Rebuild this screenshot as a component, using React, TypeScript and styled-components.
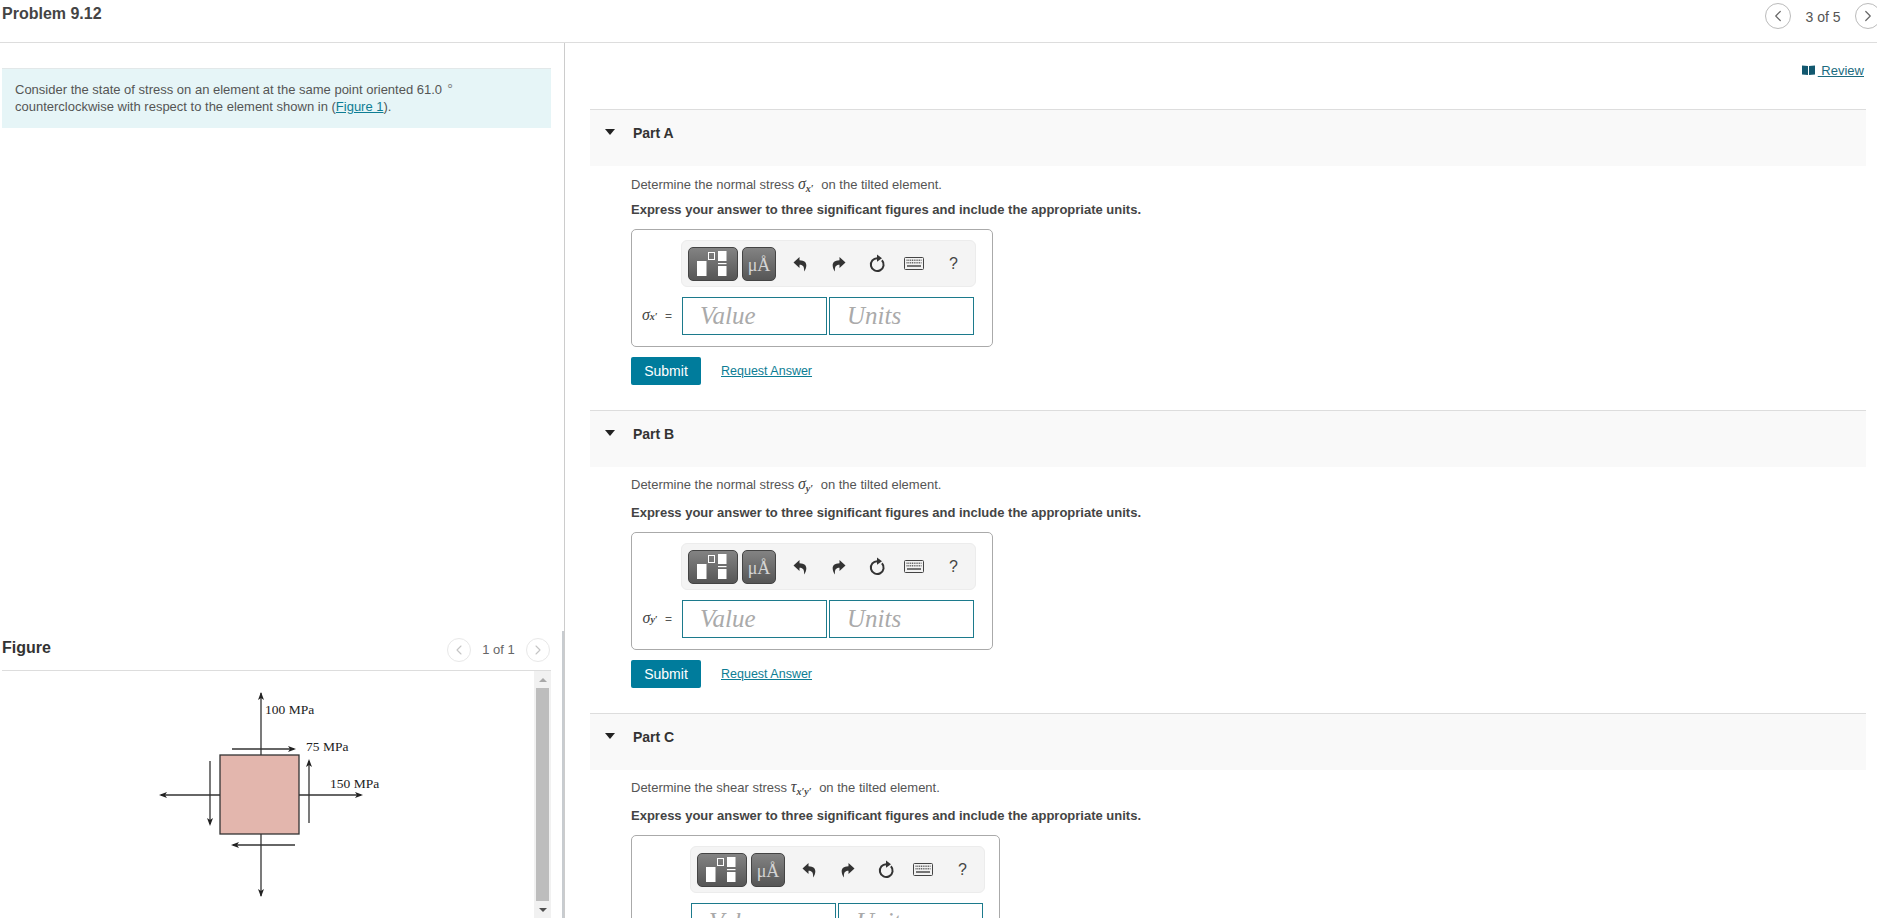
import React from 'react';
import styled, { createGlobalStyle } from 'styled-components';
import { ChevronLeft, ChevronRight } from 'lucide-react';

interface PartData {
  id: string;
  title: string;
  intro: string;
  symbol: string;
  sub: string;
  tall?: boolean;
  indent: number;
  boxWidth: number;
}

const parts: PartData[] = [
  { id: 'a', title: 'Part A', intro: 'Determine the normal stress', symbol: 'σ', sub: 'x′', indent: 50, boxWidth: 362 },
  { id: 'b', title: 'Part B', intro: 'Determine the normal stress', symbol: 'σ', sub: 'y′', tall: true, indent: 50, boxWidth: 362 },
  { id: 'c', title: 'Part C', intro: 'Determine the shear stress', symbol: 'τ', sub: 'x′y′', tall: true, indent: 59, boxWidth: 369 },
];

const TemplateIcon = () => (
  <svg width="48" height="32" viewBox="0 0 48 32">
    <rect x="8" y="13" width="9.5" height="15" fill="#fff" />
    <rect x="19.5" y="4.5" width="6" height="7" fill="none" stroke="#fff" />
    <rect x="29" y="3" width="8.5" height="10" fill="#fff" />
    <rect x="29" y="15" width="8.5" height="1.2" fill="#fff" />
    <rect x="29" y="18" width="8.5" height="10" fill="#fff" />
  </svg>
);

const UndoIcon = ({ flip }: { flip?: boolean }) => (
  <svg width="15" height="16" viewBox="0 0 15 16">
    <path
      d="M6.5 1 L0.5 6.5 L6.5 12 V8.7 C10 8.7 11.5 10.5 11 15.5 C14 11.5 15.5 4.5 6.5 4.3 Z"
      fill="#333"
      transform={flip ? 'translate(15 0) scale(-1 1)' : undefined}
    />
  </svg>
);

const ResetIcon = () => (
  <svg width="18" height="19" viewBox="0 0 18 19">
    <path
      d="M12.9 6.2 A6.4 6.4 0 1 1 8.6 4.2"
      fill="none"
      stroke="#333"
      strokeWidth="2"
    />
    <path d="M8 0.6 L13 4.2 L8 7.8 Z" fill="#333" />
  </svg>
);

const KeyboardIcon = () => (
  <svg width="20" height="13" viewBox="0 0 20 13">
    <rect x="0.5" y="0.5" width="19" height="12" rx="1" fill="#f2f2f2" stroke="#444" />
    <path d="M2.5 3.2h15M2.5 5.7h15" stroke="#666" strokeWidth="1.5" strokeDasharray="1.1 0.7" />
    <path d="M3 9h14" stroke="#555" strokeWidth="1.6" />
  </svg>
);

const BookIcon = () => (
  <svg width="13" height="10" viewBox="0 0 13 10">
    <path d="M0 0.5 L6 1 V10 L0 9.5 Z M7 1 L13 0.5 V9.5 L7 10 Z" fill="#12586f" />
  </svg>
);

const Arrow = ({ d, tip, rot }: { d: string; tip: [number, number]; rot: number }) => (
  <g>
    <path d={d} stroke="#333" strokeWidth="1.3" fill="none" />
    <path
      d="M0 0 L-8 -3 L-6 0 L-8 3 Z"
      fill="#222"
      transform={`translate(${tip[0]} ${tip[1]}) rotate(${rot})`}
    />
  </g>
);

const StressElement = () => (
  <svg width="532" height="247" viewBox="2 671 532 247">
    <rect x="220" y="755" width="79" height="79" fill="#e3b6ad" stroke="#333" strokeWidth="1.3" />
    <Arrow d="M261 755 V693" tip={[261, 692]} rot={-90} />
    <Arrow d="M261 834 V896" tip={[261, 897]} rot={90} />
    <Arrow d="M299 795 H361" tip={[363, 795]} rot={0} />
    <Arrow d="M220 795 H161" tip={[159, 795]} rot={180} />
    <Arrow d="M232 749 H294" tip={[296, 749]} rot={0} />
    <Arrow d="M295 845 H233" tip={[231, 845]} rot={180} />
    <Arrow d="M309 823 V761" tip={[309, 759]} rot={-90} />
    <Arrow d="M210 761 V824" tip={[210, 826]} rot={90} />
    <FigureLabel x="265" y="714">100 MPa</FigureLabel>
    <FigureLabel x="306" y="751">75 MPa</FigureLabel>
    <FigureLabel x="330" y="788">150 MPa</FigureLabel>
  </svg>
);

const App: React.FC = () => {
  return (
    <>
      <GlobalStyle />
      <Page>
        <TopBar>
          <Title>Problem 9.12</Title>
          <Pager>
            <RoundButton>
              <ChevronLeft size={18} strokeWidth={1.6} />
            </RoundButton>
            <PagerText>3 of 5</PagerText>
            <RoundButton>
              <ChevronRight size={18} strokeWidth={1.6} />
            </RoundButton>
          </Pager>
        </TopBar>
        <Columns>
          <LeftPane>
            <InfoBox>
              Consider the state of stress on an element at the same point oriented 61.0 <Deg>∘</Deg>
              <br />
              counterclockwise with respect to the element shown in (<TextLink>Figure 1</TextLink>).
            </InfoBox>
            <FigurePanel>
              <FigureHead>
                <FigureTitle>Figure</FigureTitle>
                <FigurePager>
                  <RoundButton $faded>
                    <ChevronLeft size={16} strokeWidth={1.6} />
                  </RoundButton>
                  <FigurePagerText>1 of 1</FigurePagerText>
                  <RoundButton $faded>
                    <ChevronRight size={16} strokeWidth={1.6} />
                  </RoundButton>
                </FigurePager>
              </FigureHead>
              <FigureScroll>
                <StressElement />
                <ScrollTrack>
                  <ScrollArrow $up />
                  <ScrollThumb />
                  <ScrollArrow />
                </ScrollTrack>
              </FigureScroll>
            </FigurePanel>
          </LeftPane>
          <RightPane>
            <ReviewRow>
              <ReviewLink>
                <BookIcon />
                <span>&nbsp;Review</span>
              </ReviewLink>
            </ReviewRow>
            {parts.map(part => (
              <PartBlock key={part.id}>
                <PartHeader>
                  <Caret />
                  <PartTitle>{part.title}</PartTitle>
                </PartHeader>
                <PartBody>
                  <Intro $tall={part.tall}>
                    {part.intro} <MathSymbol>{part.symbol}</MathSymbol>
                    <MathSub>{part.sub}</MathSub> on the tilted element.
                  </Intro>
                  <Instruction>
                    Express your answer to three significant figures and include the appropriate units.
                  </Instruction>
                  <AnswerBox $width={part.boxWidth}>
                    <Toolbar $indent={part.indent}>
                      <TemplateButton>
                        <TemplateIcon />
                      </TemplateButton>
                      <UnitButton>μÅ</UnitButton>
                      <ToolIcon $left={17}>
                        <UndoIcon />
                      </ToolIcon>
                      <ToolIcon $left={23}>
                        <UndoIcon flip />
                      </ToolIcon>
                      <ToolIcon $left={23}>
                        <ResetIcon />
                      </ToolIcon>
                      <ToolIcon $left={17}>
                        <KeyboardIcon />
                      </ToolIcon>
                      <HelpMark>?</HelpMark>
                    </Toolbar>
                    <InputRow>
                      <InputLabel $width={part.indent}>
                        <MathSymbol>{part.symbol}</MathSymbol>
                        <MathSub>{part.sub}</MathSub> =
                      </InputLabel>
                      <AnswerField>Value</AnswerField>
                      <AnswerField>Units</AnswerField>
                    </InputRow>
                  </AnswerBox>
                  <ActionRow>
                    <SubmitButton>Submit</SubmitButton>
                    <RequestLink>Request Answer</RequestLink>
                  </ActionRow>
                </PartBody>
              </PartBlock>
            ))}
          </RightPane>
        </Columns>
      </Page>
    </>
  );
};

const GlobalStyle = createGlobalStyle`
  html, body {
    margin: 0;
    height: 100%;
    overflow: hidden;
    background: #fff;
    font-family: "Liberation Sans", Arial, sans-serif;
    color: #555;
  }
`;

const Page = styled.div`
  width: 1877px;
  height: 918px;
  display: flex;
  flex-direction: column;
  overflow: hidden;
`;

const TopBar = styled.header`
  flex: none;
  height: 42px;
  border-bottom: 1px solid #ddd;
  display: flex;
  align-items: center;
  justify-content: space-between;
  padding-left: 2px;
  margin-right: -4px;
`;

const Title = styled.h1`
  margin: 0 0 14px;
  font-size: 16px;
  font-weight: bold;
  color: #444;
`;

const Pager = styled.div`
  display: flex;
  align-items: center;
  margin-bottom: 10px;
`;

const PagerText = styled.span`
  width: 64px;
  text-align: center;
  font-size: 14px;
  color: #555;
  padding-top: 2px;
`;

const RoundButton = styled.span<{ $faded?: boolean }>`
  width: ${props => (props.$faded ? '24px' : '26px')};
  height: ${props => (props.$faded ? '24px' : '26px')};
  box-sizing: border-box;
  border-radius: 50%;
  border: 1px solid ${props => (props.$faded ? '#e8e8e8' : '#bbb')};
  color: ${props => (props.$faded ? '#c4c4c4' : '#666')};
  display: flex;
  align-items: center;
  justify-content: center;
`;

const Columns = styled.div`
  flex: 1;
  min-height: 0;
  display: flex;
`;

const LeftPane = styled.aside`
  flex: none;
  width: 564px;
  border-right: 1px solid #ccc;
  display: flex;
  flex-direction: column;
  justify-content: space-between;
  padding-top: 25px;
`;

const InfoBox = styled.div`
  width: 536px;
  margin-left: 2px;
  height: 47px;
  padding: 12px 0 0 13px;
  background: #e6f5f7;
  border-top: 1px solid #e2e8e9;
  font-size: 13px;
  line-height: 17px;
  color: #555;
`;

const Deg = styled.sup`
  font-size: 13px;
  line-height: 0;
  color: #888;
`;

const TextLink = styled.a`
  color: #0d7d94;
  text-decoration: underline;
`;

const FigurePanel = styled.section`
  width: 562px;
  border-right: 2px solid #c8ccd0;
`;

const FigureHead = styled.div`
  width: 549px;
  margin-left: 2px;
  height: 40px;
  border-bottom: 1px solid #ddd;
  display: flex;
  align-items: center;
  justify-content: space-between;
  box-sizing: border-box;
`;

const FigureTitle = styled.h2`
  margin: 0 0 5px;
  font-size: 16px;
  font-weight: bold;
  color: #333;
`;

const FigurePager = styled.div`
  display: flex;
  align-items: center;
  margin: 0 1px 2px 0;
`;

const FigurePagerText = styled.span`
  width: 55px;
  text-align: center;
  font-size: 13px;
  color: #666;
`;

const FigureScroll = styled.div`
  width: 549px;
  margin-left: 2px;
  height: 247px;
  display: flex;
`;

const FigureLabel = styled.text`
  font-family: "Liberation Serif", "Times New Roman", serif;
  font-size: 13.5px;
  fill: #222;
`;

const ScrollTrack = styled.div`
  width: 17px;
  background: #f1f1f1;
  display: flex;
  flex-direction: column;
  align-items: center;
`;

const ScrollThumb = styled.div`
  flex: 1;
  width: 13px;
  background: #bdbdbd;
`;

const ScrollArrow = styled.div<{ $up?: boolean }>`
  flex: none;
  height: 17px;
  width: 0;
  display: flex;
  align-items: center;
  justify-content: center;

  &::before {
    content: '';
    border-left: 4px solid transparent;
    border-right: 4px solid transparent;
    ${props =>
      props.$up ? 'border-bottom: 4px solid #a8a8a8;' : 'border-top: 4px solid #505050;'}
  }
`;

const RightPane = styled.main`
  flex: 1;
  min-width: 0;
  padding: 0 11px 0 25px;
  overflow: hidden;
`;

const ReviewRow = styled.div`
  height: 66px;
  display: flex;
  justify-content: flex-end;
  padding: 18px 2px 0 0;
  box-sizing: border-box;
`;

const ReviewLink = styled.a`
  display: flex;
  align-items: center;
  height: 18px;
  font-size: 13px;
  color: #1c6b80;

  span {
    margin-left: 3px;
    text-decoration: underline;
  }
`;

const PartBlock = styled.section`
  padding-bottom: 25px;
`;

const PartHeader = styled.div`
  height: 57px;
  background: #f9f9f9;
  border-top: 1px solid #ddd;
  display: flex;
  align-items: center;
  padding: 0 0 10px 15px;
  box-sizing: border-box;
`;

const Caret = styled.span`
  width: 0;
  height: 0;
  border-left: 5.5px solid transparent;
  border-right: 5.5px solid transparent;
  border-top: 6px solid #222;
  margin-right: 18px;
  margin-bottom: 3px;
`;

const PartTitle = styled.h3`
  margin: 0;
  font-size: 14px;
  font-weight: bold;
  color: #333;
`;

const PartBody = styled.div`
  padding: 7px 0 0 41px;
`;

const Intro = styled.p<{ $tall?: boolean }>`
  margin: ${props => (props.$tall ? '0 0 7px' : '2px 0 5px')};
  font-size: 13px;
  line-height: ${props => (props.$tall ? '22px' : '20px')};
  color: #555;
`;

const MathSymbol = styled.i`
  font-family: "Liberation Serif", "Times New Roman", serif;
  font-size: 16px;
  line-height: 0;
  color: #444;
`;

const MathSub = styled.i`
  font-family: "Liberation Serif", "Times New Roman", serif;
  font-size: 10px;
  font-weight: bold;
  line-height: 0;
  vertical-align: -3px;
  color: #444;
  margin-right: 4px;
`;

const Instruction = styled.p`
  margin: 0 0 9px;
  font-size: 13px;
  line-height: 20px;
  font-weight: bold;
  color: #444;
`;

const AnswerBox = styled.div<{ $width: number }>`
  width: ${props => props.$width}px;
  height: 118px;
  box-sizing: border-box;
  border: 1px solid #aaa;
  border-radius: 5px;
  padding-top: 10px;
`;

const Toolbar = styled.div<{ $indent: number }>`
  width: 295px;
  height: 47px;
  margin-left: ${props => props.$indent - 1}px;
  box-sizing: border-box;
  border: 1px solid #ececec;
  border-radius: 6px;
  background: #f4f4f4;
  display: flex;
  align-items: center;
  padding-left: 6px;
`;

const TemplateButton = styled.span`
  width: 50px;
  height: 34px;
  box-sizing: border-box;
  border: 1px solid #444;
  border-radius: 5px;
  background: linear-gradient(#838383, #565656);
  display: flex;
  align-items: center;
  justify-content: center;
`;

const UnitButton = styled(TemplateButton)`
  width: 34px;
  margin-left: 4px;
  padding-top: 3px;
  font-family: "Liberation Serif", "Times New Roman", serif;
  font-size: 18px;
  color: #d4d4d4;
`;

const ToolIcon = styled.span<{ $left: number }>`
  margin-left: ${props => props.$left}px;
  display: flex;
  color: #333;
`;

const HelpMark = styled.span`
  margin-left: 25px;
  font-size: 16px;
  color: #444;
`;

const InputRow = styled.div`
  display: flex;
  align-items: center;
  margin-top: 10px;
  gap: 2px;
`;

const InputLabel = styled.span<{ $width: number }>`
  width: ${props => props.$width - 2}px;
  padding-right: 8px;
  box-sizing: border-box;
  display: flex;
  justify-content: flex-end;
  align-items: baseline;
  white-space: pre;
  font-size: 12px;
  color: #555;
`;

const AnswerField = styled.div`
  width: 145px;
  height: 38px;
  box-sizing: border-box;
  border: 1px solid #1c7a8c;
  padding-left: 17px;
  font-family: "Liberation Serif", "Times New Roman", serif;
  font-style: italic;
  font-size: 25px;
  line-height: 36px;
  color: #aaa;
`;

const ActionRow = styled.div`
  display: flex;
  align-items: flex-start;
  margin-top: 10px;
`;

const SubmitButton = styled.button`
  width: 70px;
  height: 28px;
  padding: 0;
  border: none;
  border-radius: 2px;
  background: #007c9c;
  color: #fff;
  font-family: inherit;
  font-size: 14px;
`;

const RequestLink = styled.a`
  margin: 6px 0 0 20px;
  font-size: 12.5px;
  line-height: 16px;
  color: #0d7d94;
  text-decoration: underline;
`;

export default App;
